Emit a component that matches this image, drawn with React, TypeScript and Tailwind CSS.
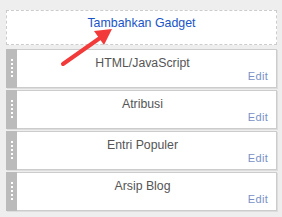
import React from 'react';

const gadgets = ['HTML/JavaScript', 'Atribusi', 'Entri Populer', 'Arsip Blog'];

const Grip: React.FC = () => (
    <div className="w-[11px] shrink-0 bg-[#bbbbbb] flex flex-col items-center pt-[10px] gap-[2px]">
        {[0, 1, 2, 3, 4].map(i => (
            <span key={i} className="block w-[2px] h-[2px] bg-white" />
        ))}
    </div>
);

const GadgetRow: React.FC<{ title: string }> = ({ title }) => (
    <div className="flex h-[39px] shadow-[1px_1px_0_#dddddd]">
        <Grip />
        <div className="flex-1 flex flex-col bg-white border border-l-0 border-[#cccccc] pt-[6px] pr-[8px]">
            <p className="text-center text-[12.3px] leading-[14px] text-[#555555]">{title}</p>
            <p className="text-right text-[11px] leading-[13px] text-[#7891c6] tracking-[0.3px]">Edit</p>
        </div>
    </div>
);

export default function App() {
    return (
        <div
            className="relative w-[282px] h-[217px] bg-[#eeeeee] pl-[6px] pr-[5px] pt-[10px] overflow-hidden"
            style={{ fontFamily: '"Liberation Sans", Arial, sans-serif' }}
        >
            <div className="h-[35px] bg-white border border-dashed border-[#cccccc] flex justify-center pt-[5px]">
                <span className="text-[12.4px] leading-[14px] text-[#1a55c8]">Tambahkan Gadget</span>
            </div>
            <div className="mt-[4px] flex flex-col gap-[2px]">
                {gadgets.map(g => (
                    <GadgetRow key={g} title={g} />
                ))}
            </div>
            <svg className="absolute left-0 top-0" width="282" height="217" viewBox="0 0 282 217">
                <line x1="63" y1="64" x2="100" y2="38" stroke="#f23a3a" strokeWidth="4" strokeLinecap="round" />
                <polygon points="112,29 94,31 104,45" fill="#f23a3a" />
            </svg>
        </div>
    );
}
